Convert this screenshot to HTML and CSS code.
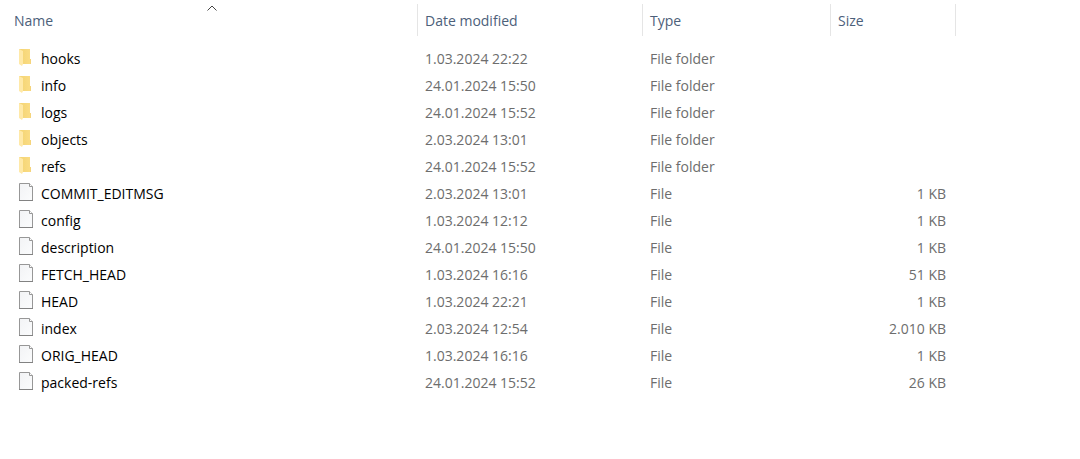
FILE: index.html
```html
<!DOCTYPE html>
<html lang="en">
<head>
<meta charset="utf-8">
<meta name="viewport" content="width=device-width, initial-scale=1">
<title>Files</title>
<link rel="stylesheet" href="styles.css">
</head>
<body>
<svg class="sprite" aria-hidden="true">
  <defs>
    <linearGradient id="folder-back" x1="0" y1="0" x2="1" y2="0">
      <stop offset="0" stop-color="#f3d372"/>
      <stop offset="1" stop-color="#fbdd85"/>
    </linearGradient>
    <linearGradient id="paper" x1="0" y1="0" x2="1" y2="1">
      <stop offset="0" stop-color="#f2f3f5"/>
      <stop offset="1" stop-color="#fbfcfd"/>
    </linearGradient>
  </defs>
  <symbol id="folder" viewBox="0 0 15 21">
    <path d="M0 1H11V11H12V16H3Z" fill="url(#folder-back)"/>
    <path d="M11 11H12V16H11Z" fill="#f5d47c"/>
    <path d="M0 1L4 3V16L3 18L0 16Z" fill="#ffe9a8"/>
  </symbol>
  <symbol id="file" viewBox="0 0 15 21">
    <path d="M0.500 0.500H10.500L13.500 3.500V17.500H0.500Z" fill="url(#paper)" stroke="#979797"/>
    <path d="M10.500 0.500V3.500H13.500" fill="#fff" stroke="#979797"/>
    <path d="M0 17.500H14" stroke="#828282"/>
  </symbol>
</svg>
<main class="file-list">
  <table class="files">
    <colgroup>
      <col>
      <col class="col-date">
      <col class="col-type">
      <col class="col-size">
      <col class="col-rest">
    </colgroup>
    <thead>
      <tr>
        <th scope="col" aria-sort="ascending"><button class="sort" type="button">Name<svg class="caret" viewBox="0 0 10 6" aria-hidden="true"><path d="M0.500 5.500L5 1L9.500 5.500" fill="none" stroke="#444"/></svg></button></th>
        <th scope="col"><button class="sort" type="button">Date modified</button></th>
        <th scope="col"><button class="sort" type="button">Type</button></th>
        <th scope="col"><button class="sort" type="button">Size</button></th>
        <td></td>
      </tr>
    </thead>
    <tbody>
      <tr><td><span class="name"><svg class="icon"><use href="#folder"/></svg>hooks</span></td><td>1.03.2024 22:22</td><td>File folder</td><td class="size"></td><td></td></tr>
      <tr><td><span class="name"><svg class="icon"><use href="#folder"/></svg>info</span></td><td>24.01.2024 15:50</td><td>File folder</td><td class="size"></td><td></td></tr>
      <tr><td><span class="name"><svg class="icon"><use href="#folder"/></svg>logs</span></td><td>24.01.2024 15:52</td><td>File folder</td><td class="size"></td><td></td></tr>
      <tr><td><span class="name"><svg class="icon"><use href="#folder"/></svg>objects</span></td><td>2.03.2024 13:01</td><td>File folder</td><td class="size"></td><td></td></tr>
      <tr><td><span class="name"><svg class="icon"><use href="#folder"/></svg>refs</span></td><td>24.01.2024 15:52</td><td>File folder</td><td class="size"></td><td></td></tr>
      <tr><td><span class="name"><svg class="icon"><use href="#file"/></svg>COMMIT_EDITMSG</span></td><td>2.03.2024 13:01</td><td>File</td><td class="size">1 KB</td><td></td></tr>
      <tr><td><span class="name"><svg class="icon"><use href="#file"/></svg>config</span></td><td>1.03.2024 12:12</td><td>File</td><td class="size">1 KB</td><td></td></tr>
      <tr><td><span class="name"><svg class="icon"><use href="#file"/></svg>description</span></td><td>24.01.2024 15:50</td><td>File</td><td class="size">1 KB</td><td></td></tr>
      <tr><td><span class="name"><svg class="icon"><use href="#file"/></svg>FETCH_HEAD</span></td><td>1.03.2024 16:16</td><td>File</td><td class="size">51 KB</td><td></td></tr>
      <tr><td><span class="name"><svg class="icon"><use href="#file"/></svg>HEAD</span></td><td>1.03.2024 22:21</td><td>File</td><td class="size">1 KB</td><td></td></tr>
      <tr><td><span class="name"><svg class="icon"><use href="#file"/></svg>index</span></td><td>2.03.2024 12:54</td><td>File</td><td class="size">2.010 KB</td><td></td></tr>
      <tr><td><span class="name"><svg class="icon"><use href="#file"/></svg>ORIG_HEAD</span></td><td>1.03.2024 16:16</td><td>File</td><td class="size">1 KB</td><td></td></tr>
      <tr><td><span class="name"><svg class="icon"><use href="#file"/></svg>packed-refs</span></td><td>24.01.2024 15:52</td><td>File</td><td class="size">26 KB</td><td></td></tr>
    </tbody>
  </table>
</main>
</body>
</html>
```

FILE: styles.css
```css
body {
  margin: 0;
  background: #fff;
  color: #6d6d6d;
  font-family: "Open Sans", "Noto Sans", sans-serif;
  font-size: 14px;
  line-height: 27px;
}

.sprite {
  position: absolute;
  width: 0;
  height: 0;
}

.file-list {
  padding: 4px 0 0 7px;
}

.files {
  width: 100%;
  table-layout: fixed;
  border-collapse: separate;
  border-spacing: 0;
}

.col-date { width: 225px; }
.col-type { width: 188px; }
.col-size { width: 125px; }
.col-rest { width: 124px; }

.files th {
  position: relative;
  padding: 0;
  border-right: 1px solid #e5e5e5;
  font-weight: 400;
}

.sort {
  display: block;
  width: 100%;
  padding: 2px 7px 0;
  border: 0;
  background: none;
  color: #4c607a;
  font: inherit;
  line-height: 30px;
  text-align: left;
}

.caret {
  position: absolute;
  top: 1px;
  left: 50%;
  width: 10px;
  height: 6px;
  margin-left: -5px;
}

.files tbody::before {
  content: "";
  display: block;
  height: 9px;
}

.files tbody td {
  height: 27px;
  padding: 0 7px;
  white-space: nowrap;
}

.files tbody td:first-child {
  padding-left: 12px;
}

.files tbody .size {
  padding-right: 10px;
  text-align: right;
}

.name {
  display: flex;
  align-items: center;
  gap: 7px;
  color: #000;
}

.icon {
  width: 15px;
  height: 21px;
}
```
